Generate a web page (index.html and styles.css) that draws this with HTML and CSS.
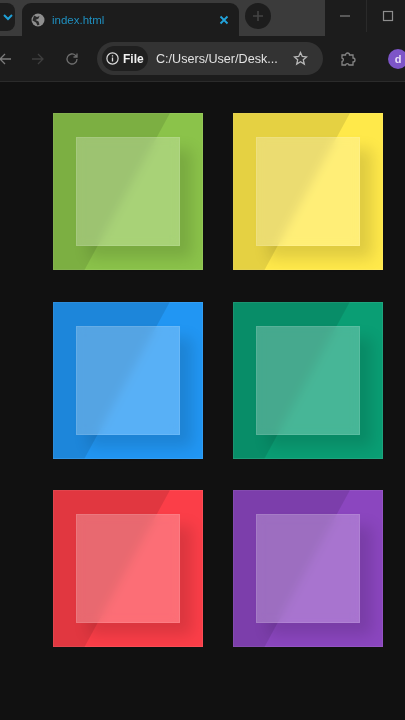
FILE: index.html
```html
<!DOCTYPE html>
<html>
<head>
    <title>index.html</title>
    <meta charset="UTF-8">
    <link rel="stylesheet" href="styles.css">
</head>
<body>
    <div class="browser">
        <div class="tab-strip">
            <div class="tabs">
                <div class="tab-search">
                    <svg width="10" height="10" viewBox="0 0 10 10"><path d="M1 3l4 4 4-4" fill="none" stroke="#1f9fd6" stroke-width="2"/></svg>
                </div>
                <div class="tab">
                    <svg class="globe" width="14" height="14" viewBox="0 0 14 14">
                        <circle cx="7" cy="7" r="6.5" fill="#8e8e8e"/>
                        <path d="M3 2.5l3 1.500 2.500-1-1 2.500-3 1.500 3 1.500 1 3-2 1-1.500-3-3.500-2z" fill="#2a2a2a"/>
                    </svg>
                    <span class="tab-title">index.html</span>
                    <svg class="tab-close" width="10" height="10" viewBox="0 0 10 10"><path d="M1.500 1.500l7 7M8.500 1.500l-7 7" stroke="#23a4dc" stroke-width="1.800"/></svg>
                </div>
                <div class="new-tab">
                    <svg width="12" height="12" viewBox="0 0 12 12"><path d="M6 1v10M1 6h10" stroke="#444444" stroke-width="1.600"/></svg>
                </div>
            </div>
            <div class="window-controls">
                <svg class="minimize" width="12" height="12" viewBox="0 0 12 12"><path d="M1 6h10" stroke="#808080" stroke-width="1.200"/></svg>
                <span class="divider"></span>
                <svg class="maximize" width="12" height="12" viewBox="0 0 12 12"><rect x="1.500" y="1.500" width="9" height="9" fill="none" stroke="#8e8e8e" stroke-width="1.200"/></svg>
            </div>
        </div>
        <div class="toolbar">
            <svg class="back" width="14" height="14" viewBox="0 0 14 14"><path d="M13 7H2M7 2L2 7l5 5" fill="none" stroke="#7c7c7c" stroke-width="1.300"/></svg>
            <svg class="forward" width="14" height="14" viewBox="0 0 14 14"><path d="M1 7h11M7 2l5 5-5 5" fill="none" stroke="#3e3e3e" stroke-width="1.300"/></svg>
            <svg class="reload" width="14" height="14" viewBox="0 0 14 14"><path d="M12 7a5 5 0 1 1-1.500-3.600L12 5M12 1.500V5H8.500" fill="none" stroke="#6e6e6e" stroke-width="1.300"/></svg>
            <div class="omnibox">
                <div class="site-chip">
                    <svg width="13" height="13" viewBox="0 0 13 13"><circle cx="6.500" cy="6.500" r="5.600" fill="none" stroke="#dcdcdc" stroke-width="1.200"/><path d="M6.500 5.600v4M6.500 3.200v1.200" stroke="#dcdcdc" stroke-width="1.300"/></svg>
                    <span class="site-label">File</span>
                </div>
                <span class="url">C:/Users/User/Desk...</span>
                <svg class="star" width="15" height="15" viewBox="0 0 15 15"><path d="M7.500 1.500l1.800 4 4.200.4-3.200 2.900 1 4.300-3.800-2.300-3.800 2.300 1-4.300L1.500 5.900l4.200-.4z" fill="none" stroke="#b8b8b8" stroke-width="1.300"/></svg>
            </div>
            <svg class="extensions" width="16" height="16" viewBox="0 0 16 16"><path d="M2 4h3.500a2 2 0 0 1 4 0H13v3a2 2 0 0 1 0 4v3H9a1.800 1.800 0 0 0-3.500 0H2v-3.500a1.800 1.800 0 0 0 0-3.500z" fill="none" stroke="#858585" stroke-width="1.300"/></svg>
            <div class="avatar">d</div>
        </div>
    </div>

    <div class="grid">
        <div class="card green"><div class="glass"></div></div>
        <div class="card yellow"><div class="glass"></div></div>
        <div class="card blue"><div class="glass"></div></div>
        <div class="card teal"><div class="glass"></div></div>
        <div class="card red"><div class="glass"></div></div>
        <div class="card purple"><div class="glass"></div></div>
    </div>
</body>
</html>
```

FILE: styles.css
```css
html, body {
    height: 100%;
}

body {
    margin: 0;
    background: #111111;
    font-family: "Liberation Sans", Arial, sans-serif;
    overflow: hidden;
}

.browser {
    background: #1c1c1c;
    border-bottom: 1px solid #2b2b2b;
    filter: blur(0.5px);
}

.browser svg {
    flex: none;
}

.tab-strip {
    display: flex;
    height: 36px;
}

.tabs {
    display: flex;
    align-items: flex-start;
    width: 325px;
    background: #3b3b3b;
}

.tab-search {
    display: flex;
    align-items: center;
    justify-content: center;
    width: 15px;
    height: 28px;
    margin-top: 3px;
    background: #1d1d1d;
    border-radius: 0 8px 8px 0;
}

.tab {
    display: flex;
    align-items: center;
    width: 217px;
    height: 33px;
    margin-top: 3px;
    margin-left: 7px;
    padding: 0 9px;
    box-sizing: border-box;
    background: #1c1c1c;
    border-radius: 9px 9px 0 0;
}

.tab-title {
    margin-left: 7px;
    color: #1f8fbf;
    font-size: 11.5px;
}

.tab-close {
    margin-left: auto;
    margin-right: 1px;
}

.new-tab {
    display: flex;
    align-items: center;
    justify-content: center;
    width: 26px;
    height: 26px;
    margin-top: 3px;
    margin-left: 6px;
    background: #1d1d1d;
    border-radius: 50%;
}

.window-controls {
    display: flex;
    align-items: center;
    flex: 1;
    height: 32px;
}

.minimize {
    margin-left: 14px;
}

.divider {
    width: 1px;
    height: 32px;
    margin-left: 15px;
    background: #2a2a2a;
}

.maximize {
    margin-left: 15px;
}

.toolbar {
    display: flex;
    align-items: center;
    height: 45px;
}

.back {
    margin-left: -2px;
}

.forward {
    margin-left: 19px;
}

.reload {
    margin-left: 20px;
}

.omnibox {
    display: flex;
    align-items: center;
    flex: none;
    width: 226px;
    height: 33px;
    margin-left: 18px;
    padding-left: 5px;
    box-sizing: border-box;
    background: #333333;
    border-radius: 17px;
}

.site-chip {
    display: flex;
    align-items: center;
    gap: 4px;
    width: 46px;
    height: 25px;
    padding-left: 4px;
    box-sizing: border-box;
    background: #1f1f1f;
    border-radius: 13px;
}

.site-label {
    color: #f0f0f0;
    font-size: 12px;
    font-weight: 700;
}

.url {
    margin-left: 8px;
    color: #e2e2e2;
    font-size: 12.6px;
    white-space: nowrap;
}

.star {
    margin-left: auto;
    margin-right: 15px;
}

.extensions {
    margin-left: 17px;
}

.avatar {
    display: flex;
    align-items: center;
    justify-content: center;
    flex: none;
    width: 20px;
    height: 20px;
    margin-left: 32px;
    background: #7d55c8;
    border-radius: 50%;
    color: #e8e0f8;
    font-size: 11px;
    font-weight: 700;
}

.grid {
    display: grid;
    grid-template-columns: 150px 150px;
    grid-auto-rows: 157px;
    column-gap: 30px;
    row-gap: 31.5px;
    padding: 31px 0 0 53px;
}

.card {
    position: relative;
    display: flex;
    align-items: center;
    justify-content: center;
    box-shadow: inset 0 0 0 1px rgba(255,255,255,0.08);
}

.card::before {
    content: "";
    position: absolute;
    inset: 0;
    background: rgba(0,0,0,0.1);
    clip-path: polygon(0 0, 78% 0, 21% 100%, 0 100%);
}

.glass {
    position: relative;
    width: 104px;
    height: 109px;
    box-sizing: border-box;
    background: rgba(255,255,255,0.25);
    border: 1px solid rgba(255,255,255,0.1);
    backdrop-filter: blur(5px);
    box-shadow: 12px 12px 14px rgba(0,0,0,0.13);
}

.green { background: #8bc34a; }
.yellow { background: #ffe94a; }
.blue { background: #2196f3; }
.teal { background: #0a9e74; }
.red { background: #fb3e48; }
.purple { background: #8b46bf; }
```
